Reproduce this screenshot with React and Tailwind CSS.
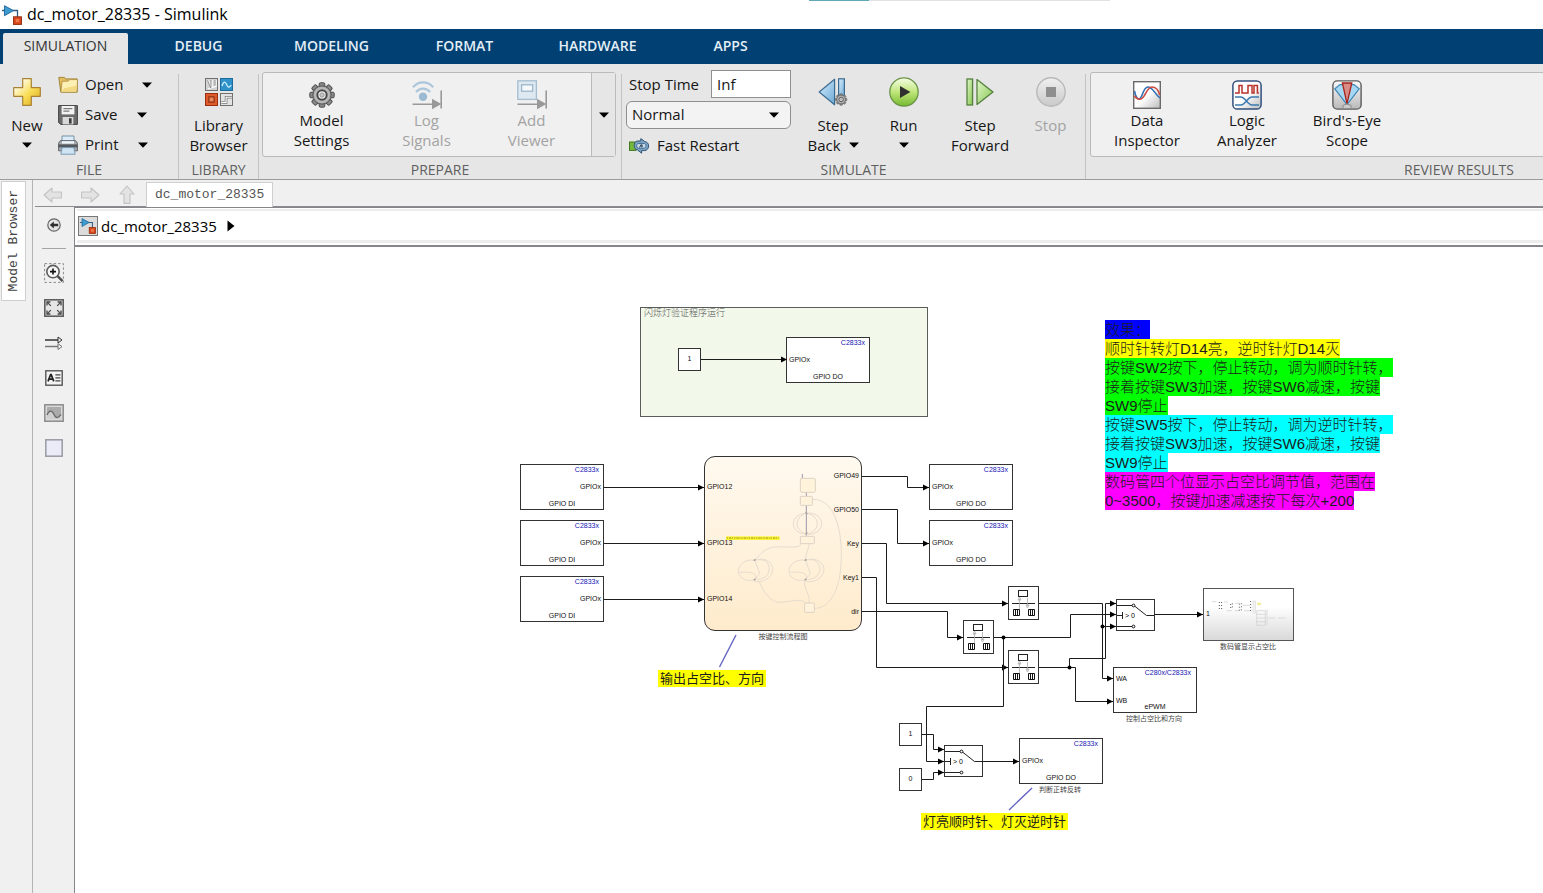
import React, { useState } from 'react';
import clsx from 'clsx';

/* ---------- small shared pieces ---------- */

const Caret = ({ className }) => (
  <svg viewBox="0 0 10 6" className={clsx('h-[6px] w-[10px] shrink-0', className)} aria-hidden="true">
    <path d="M0 0.5h10L5 5.7z" fill="#000" />
  </svg>
);

const Separator = () => <div className="mt-[10px] w-px shrink-0 self-stretch bg-[#c4c4c4]" />;

/* ---------- icons ---------- */

const SimulinkLogo = ({ className }) => (
  <svg viewBox="0 0 20 20" className={className} aria-hidden="true">
    <path d="M0 5.5h3M11 5.5h4.5V12" stroke="#2d5d80" strokeWidth="1.3" fill="none" />
    <path d="M2.5 0.7v10L11.5 5.6z" fill="#3c9bd0" stroke="#1d6496" strokeWidth="0.9" />
    <rect x="11.5" y="11.8" width="8" height="7.6" fill="#d9481c" stroke="#8e2708" strokeWidth="0.9" />
    <rect x="13.8" y="14" width="3.4" height="3.2" fill="#ef7a4d" />
  </svg>
);

const NewIcon = () => (
  <svg viewBox="0 0 28 28" className="size-7" aria-hidden="true">
    <defs>
      <linearGradient id="plus" x1="0" y1="0" x2="1" y2="1">
        <stop offset="0.2" stopColor="#fffbe0" />
        <stop offset="0.55" stopColor="#f9dd55" />
        <stop offset="1" stopColor="#d9a51a" />
      </linearGradient>
    </defs>
    <path
      d="M9.7 0.7h8.6v9h9v8.6h-9v9H9.7v-9h-9V9.7h9z"
      fill="url(#plus)"
      stroke="#a88235"
      strokeWidth="1.2"
      strokeLinejoin="round"
    />
  </svg>
);

const OpenIcon = () => (
  <svg viewBox="0 0 20 20" className="size-5" aria-hidden="true">
    <path d="M0.8 2.4h5.6l1.2 1.5h11.6v13.2H2.8z" fill="#e3bd62" stroke="#9b7a2a" strokeWidth="0.9" />
    <path d="M4.2 6.2h6l1.4-1.6h8l-0.8 12.5H2.8z" fill="#fdf0b4" stroke="#a98a3c" strokeWidth="0.8" />
    <path d="M3.2 16.6l3-3.4 12.6-2.6-0.6 6z" fill="#f4d983" />
  </svg>
);

const SaveIcon = () => (
  <svg viewBox="0 0 20 20" className="size-5" aria-hidden="true">
    <path d="M0.6 0.6h18.8v18.8H2.6l-2-2z" fill="#6b6b6b" stroke="#444" strokeWidth="1" />
    <rect x="3.6" y="1" width="12.8" height="8.4" fill="#f3f3f3" />
    <path d="M5.4 3.6h9M5.4 6.2h6" stroke="#7b7b7b" strokeWidth="1.2" />
    <rect x="4.6" y="12" width="10.8" height="7.4" fill="#d8d8d8" />
    <rect x="11" y="13.2" width="2.6" height="5.4" fill="#3c3c3c" />
  </svg>
);

const PrintIcon = () => (
  <svg viewBox="0 0 20 20" className="size-5" aria-hidden="true">
    <path d="M4 7.5V1h12v6.5" fill="#dcecf7" stroke="#7592a8" strokeWidth="1" />
    <path d="M2.4 5.6h15.2l1.9 2.6v7.6H0.5V8.2z" fill="#a5a9ad" stroke="#5e6367" strokeWidth="0.9" />
    <path d="M0.5 9.4h19v3H0.5z" fill="#55595d" />
    <path d="M4 6.2h12v2.4H4z" fill="#eef6fb" />
    <path d="M4.2 12.6h11.6l1.4 6.6H2.8z" fill="#cfe4f3" stroke="#6f93b0" strokeWidth="0.9" />
  </svg>
);

const LibraryIcon = () => (
  <svg viewBox="0 0 28 28" className="size-7" aria-hidden="true">
    <rect x="0.5" y="0.5" width="12" height="12" fill="#d3d3d3" stroke="#707070" />
    <path d="M3.4 2.4l3.4 8M7 2v7.6M11 2v6.4L3 11" stroke="#fff" strokeWidth="1.3" fill="none" />
    <path d="M2.6 2.4l3.4 8M6 2v7.6M10 2v5.6" stroke="#7d7d7d" strokeWidth="0.8" fill="none" />
    <rect x="15.5" y="0.5" width="12" height="12" fill="#2f93c9" stroke="#1c6c9c" />
    <path d="M17 8c1.6-5 3.2-5 4.6-1.4s2.6 3.2 4.6 0.6" stroke="#c9ecff" strokeWidth="1.3" fill="none" />
    <rect x="0.5" y="15.5" width="12" height="12" fill="#dd5a2c" stroke="#97300d" />
    <rect x="3.9" y="18.9" width="5.2" height="5.2" fill="#e88a5f" stroke="#7e2408" />
    <rect x="15.5" y="15.5" width="12" height="12" fill="#e3e3e3" stroke="#707070" />
    <path d="M16.5 24.4h4.6v-5.2h6" stroke="#777" strokeWidth="2.6" fill="none" />
    <path d="M16.5 24.4h4.6v-5.2h6" stroke="#fff" strokeWidth="1.1" fill="none" />
  </svg>
);

const GEAR_ANGLES = [0, 45, 90, 135, 180, 225, 270, 315];

const GearShape = () => (
  <g>
    {GEAR_ANGLES.map((angle) => (
      <rect
        key={angle}
        x="10.2"
        y="0.8"
        width="5.6"
        height="5"
        rx="1.2"
        fill="#8a8a8a"
        stroke="#4b4b4b"
        strokeWidth="1"
        transform={`rotate(${angle} 13 13)`}
      />
    ))}
    <circle cx="13" cy="13" r="9.2" fill="#9b9b9b" stroke="#555" strokeWidth="1" />
    <circle cx="13" cy="13" r="7" fill="none" stroke="#b9b9b9" strokeWidth="2" />
    <circle cx="13" cy="13" r="4.6" fill="#efefef" stroke="#484848" strokeWidth="1.8" />
    <circle cx="13" cy="13" r="2.2" fill="#c5c5c5" stroke="#777" strokeWidth="0.6" />
  </g>
);

const SettingsIcon = () => (
  <svg viewBox="0 0 26 26" className="size-[26px]" aria-hidden="true">
    <GearShape />
  </svg>
);

const LogSignalsIcon = () => (
  <svg viewBox="0 0 30 30" className="size-[30px]" aria-hidden="true">
    <path d="M1 7.2c5.6-6.4 14.6-6.4 20.2 0" stroke="#abc6db" strokeWidth="2.2" fill="none" />
    <path d="M4 12c4-4.6 10.2-4.6 14.2 0" stroke="#abc6db" strokeWidth="2.2" fill="none" />
    <circle cx="11" cy="16.8" r="4.2" fill="#9cbbd3" />
    <path d="M0.5 24.2h20M29.2 10.5v18" stroke="#999" strokeWidth="1.6" fill="none" />
    <path d="M20 18.8v10.4l9.4-5.2z" fill="#999" />
  </svg>
);

const AddViewerIcon = () => (
  <svg viewBox="0 0 30 30" className="size-[30px]" aria-hidden="true">
    <rect x="0.8" y="0.8" width="18.6" height="18.6" fill="#dde8f1" stroke="#a5bdd0" strokeWidth="1.3" />
    <rect x="4.6" y="4.8" width="11" height="6.4" fill="#f5f9fc" stroke="#9db6ca" strokeWidth="1.3" />
    <path d="M0.5 24.2h20M29.2 10.5v18" stroke="#999" strokeWidth="1.6" fill="none" />
    <path d="M20 18.8v10.4l9.4-5.2z" fill="#999" />
  </svg>
);

const FastRestartIcon = () => (
  <svg viewBox="0 0 20 16" className="h-4 w-5" aria-hidden="true">
    <rect x="0.5" y="4" width="6.4" height="8.4" fill="#76b83c" stroke="#417a1c" />
    <path
      d="M8.4 3h3.4V0.6l4 3c2.6 0.4 3.8 2 3.8 4.4s-1.4 4.4-4 4.6h-3v2.6l-4-3.2c-2.2-0.4-3.4-2-3.4-4.2S6 3.4 8.4 3z"
      fill="#7aa3c6"
      stroke="#2f5475"
      strokeWidth="1"
    />
    <path d="M9 5.6h6.4c2 0.4 2 4 0 4.6H9c-1.8-0.4-1.8-4.2 0-4.6z" fill="#cfe1ef" stroke="#3c6284" strokeWidth="0.9" />
    <path d="M10.5 9.6l1.6-3.2M12.8 6.2v3.4M10.8 8h3.4" stroke="#27455f" strokeWidth="0.9" />
  </svg>
);

const StepBackIcon = () => (
  <svg viewBox="0 0 30 28" className="h-7 w-[30px]" aria-hidden="true">
    <defs>
      <linearGradient id="blueStep" x1="0" y1="0" x2="1" y2="1">
        <stop offset="0" stopColor="#d8efff" />
        <stop offset="1" stopColor="#6aa8d4" />
      </linearGradient>
    </defs>
    <path d="M16.6 1.2v25.6L1.2 14z" fill="url(#blueStep)" stroke="#3d6b8e" strokeWidth="1.2" strokeLinejoin="round" />
    <rect x="20.6" y="0.8" width="5.8" height="20" fill="url(#blueStep)" stroke="#3d6b8e" strokeWidth="1.2" />
    <g transform="translate(17 15.4) scale(0.47)">
      <GearShape />
    </g>
  </svg>
);

const RunIcon = () => (
  <svg viewBox="0 0 30 30" className="size-[30px]" aria-hidden="true">
    <defs>
      <linearGradient id="run" x1="0" y1="0" x2="0" y2="1">
        <stop offset="0" stopColor="#f5fde6" />
        <stop offset="0.5" stopColor="#c0e67a" />
        <stop offset="1" stopColor="#74b92f" />
      </linearGradient>
    </defs>
    <circle cx="15" cy="15" r="14.2" fill="url(#run)" stroke="#6a9448" strokeWidth="1.3" />
    <path d="M11 9v12l10.4-6z" fill="#303030" />
  </svg>
);

const StepForwardIcon = () => (
  <svg viewBox="0 0 28 28" className="size-7" aria-hidden="true">
    <defs>
      <linearGradient id="greenStep" x1="0" y1="0" x2="1" y2="1">
        <stop offset="0" stopColor="#e1f8c9" />
        <stop offset="1" stopColor="#86c552" />
      </linearGradient>
    </defs>
    <rect x="1" y="1" width="5.6" height="26" fill="url(#greenStep)" stroke="#56803f" strokeWidth="1.3" />
    <path d="M11 1.4v25.2L27 14z" fill="url(#greenStep)" stroke="#56803f" strokeWidth="1.3" strokeLinejoin="round" />
  </svg>
);

const StopIcon = () => (
  <svg viewBox="0 0 30 30" className="size-[30px]" aria-hidden="true">
    <defs>
      <linearGradient id="stop" x1="0" y1="0" x2="0" y2="1">
        <stop offset="0" stopColor="#f0f0f0" />
        <stop offset="1" stopColor="#c9c9c9" />
      </linearGradient>
    </defs>
    <circle cx="15" cy="15" r="14.2" fill="url(#stop)" stroke="#b9b9b9" strokeWidth="1.4" />
    <rect x="10" y="10" width="10" height="10" fill="#8f8f8f" />
  </svg>
);

const DataInspectorIcon = () => (
  <svg viewBox="0 0 28 28" className="size-7" aria-hidden="true">
    <defs>
      <linearGradient id="panelFill" x1="0" y1="0" x2="1" y2="1">
        <stop offset="0.5" stopColor="#fff" />
        <stop offset="1" stopColor="#bcbcbc" />
      </linearGradient>
    </defs>
    <rect x="0.7" y="0.7" width="26.6" height="26.6" fill="url(#panelFill)" stroke="#6a6a6a" strokeWidth="1.4" />
    <path d="M1.5 10c1 5 2.4 8 4.4 8 3.6 0 4-12 9-12s6 6 12 11" stroke="#2f6fb3" strokeWidth="1.6" fill="none" />
    <path d="M1.5 15c1.6 2.6 4 3.4 6.4 3 4.6-1 5.6-12 11-12 4.400 0 6.400 2.400 7.800 8" stroke="#cf4a3f" strokeWidth="1.6" fill="none" />
  </svg>
);

const LogicAnalyzerIcon = () => (
  <svg viewBox="0 0 30 30" className="size-[30px]" aria-hidden="true">
    <rect x="0.9" y="0.9" width="28.2" height="28.2" rx="4.4" fill="url(#panelFill)" stroke="#33507f" strokeWidth="1.5" />
    <path d="M3 13h4V5.6h3V13h6V5.6h4V13h2V5.6h3.4V13h1.4" stroke="#b93329" strokeWidth="1.5" fill="none" />
    <path d="M3 17h6c4 0 6.6 8 11 8h7M3 25h6c4 0 6.6-8 11-8h7" stroke="#3b7ab0" strokeWidth="1.5" fill="none" />
  </svg>
);

const BirdsEyeIcon = () => (
  <svg viewBox="0 0 30 30" className="size-[30px]" aria-hidden="true">
    <defs>
      <linearGradient id="birdFill" x1="0" y1="0" x2="0" y2="1">
        <stop offset="0" stopColor="#fafafa" />
        <stop offset="1" stopColor="#b9b9b9" />
      </linearGradient>
    </defs>
    <rect x="0.9" y="0.9" width="28.2" height="28.2" rx="4.4" fill="url(#birdFill)" stroke="#5c5c5c" strokeWidth="1.4" />
    <path d="M15 24.6L2.8 8.8 8 4.6h14l5.2 4.2z" fill="#a6d7f2" stroke="#3d86b7" strokeWidth="1.2" />
    <path d="M15 23.6L10.4 3h9.4z" fill="#d98b85" stroke="#a8231c" strokeWidth="1.3" />
    <path d="M11 28v-2.6l4-1.4 4 1.4V28" fill="#ccc" stroke="#8a8a8a" strokeWidth="1" />
  </svg>
);

const NavArrow = ({ className }) => (
  <svg viewBox="0 0 20 16" className={clsx('h-4 w-5', className)} aria-hidden="true">
    <path d="M1 8l8-7v4h9.4v6H9v4z" fill="#e3e3e3" stroke="#c3c3c3" strokeWidth="1.1" strokeLinejoin="round" />
  </svg>
);

/* ---------- tool strip ---------- */

const TOOLSTRIP_TABS = ['SIMULATION', 'DEBUG', 'MODELING', 'FORMAT', 'HARDWARE', 'APPS'];

const Group = ({ label, className, children }) => (
  <section className={clsx('flex shrink-0 flex-col', className)}>
    <div className="flex h-24 pt-[6px]">{children}</div>
    <h2 className="h-[19px] text-center text-[14px] leading-5 text-[#5f5f5f]">{label}</h2>
  </section>
);

const BigButton = ({ icon, lines, caret, inlineCaret, disabled, className }) => (
  <button
    type="button"
    disabled={disabled}
    className={clsx('flex shrink-0 flex-col items-center leading-5', disabled ? 'text-[#a3a3a3]' : 'text-[#161616]', className)}
  >
    <span className="mb-px flex h-11 items-center justify-center">{icon}</span>
    {lines.map((line, i) => (
      <span key={line} className="flex items-center gap-2 whitespace-nowrap">
        {line}
        {inlineCaret && i === lines.length - 1 && <Caret />}
      </span>
    ))}
    {caret && <Caret className="mt-[7px]" />}
  </button>
);

const PanelButton = ({ icon, lines, disabled, className }) => (
  <button
    type="button"
    disabled={disabled}
    className={clsx('flex shrink-0 flex-col items-center pt-[6px] leading-5', disabled ? 'text-[#a3a3a3]' : 'text-[#161616]', className)}
  >
    <span className="flex h-[31px] items-center justify-center">{icon}</span>
    {lines.map((line) => (
      <span key={line} className="whitespace-nowrap">{line}</span>
    ))}
  </button>
);

const FileRow = ({ icon, label }) => (
  <button type="button" className="flex h-[30px] items-center text-left text-[#161616]">
    {icon}
    <span className="mr-[19px] ml-[7px] min-w-[33px] pb-[2px]">{label}</span>
    <Caret />
  </button>
);

const Toolstrip = () => {
  const [stopTime, setStopTime] = useState('Inf');
  const [mode, setMode] = useState('Normal');

  return (
    <div className="flex shrink-0 overflow-hidden border-b border-[#9b9b9b] bg-[#e6e6e6] text-[15px]">
      <Group label="FILE" className="w-[178px]">
        <BigButton icon={<NewIcon />} lines={['New']} caret className="w-[54px]" />
        <div className="ml-1 flex flex-col">
          <FileRow icon={<OpenIcon />} label="Open" />
          <FileRow icon={<SaveIcon />} label="Save" />
          <FileRow icon={<PrintIcon />} label="Print" />
        </div>
      </Group>
      <Separator />

      <Group label="LIBRARY" className="w-[79px]">
        <BigButton icon={<LibraryIcon />} lines={['Library', 'Browser']} className="w-full" />
      </Group>
      <Separator />

      <Group label="PREPARE" className="w-[362px]">
        <div className="mt-[2px] ml-[3px] flex h-[85px] rounded-[3px] border border-[#bababa] bg-[#f0f0f0] pl-[6px]">
          <PanelButton icon={<SettingsIcon />} lines={['Model', 'Settings']} className="w-[105px]" />
          <PanelButton icon={<LogSignalsIcon />} lines={['Log', 'Signals']} disabled className="w-[105px]" />
          <PanelButton icon={<AddViewerIcon />} lines={['Add', 'Viewer']} disabled className="w-[105px]" />
          <button
            type="button"
            aria-label="More prepare tools"
            className="ml-[7px] flex w-6 items-center justify-center border-l border-[#bababa] bg-[#e6e6e6]"
          >
            <Caret />
          </button>
        </div>
      </Group>
      <Separator />

      <Group label="SIMULATE" className="w-[463px]">
        <div className="ml-1 flex w-[165px] flex-col text-[#161616]">
          <div className="flex items-center justify-between">
            <label htmlFor="stop-time" className="ml-[3px] whitespace-nowrap">Stop Time</label>
            <input
              id="stop-time"
              value={stopTime}
              onChange={(e) => setStopTime(e.target.value)}
              className="h-7 w-20 border border-[#8f8f8f] bg-white px-[5px] outline-none"
            />
          </div>
          <div className="relative mt-[3px]">
            <select
              aria-label="Simulation mode"
              value={mode}
              onChange={(e) => setMode(e.target.value)}
              className="h-7 w-full appearance-none rounded-[6px] border border-[#8f8f8f] bg-[#f3f3f3] px-[5px] pb-[2px] leading-5"
            >
              <option>Normal</option>
              <option>Accelerator</option>
              <option>External</option>
            </select>
            <Caret className="pointer-events-none absolute top-[11px] right-3" />
          </div>
          <button type="button" className="mt-[3px] flex h-[27px] items-center gap-2 px-[3px] whitespace-nowrap">
            <FastRestartIcon />
            Fast Restart
          </button>
        </div>
        <BigButton icon={<StepBackIcon />} lines={['Step', 'Back']} inlineCaret className="ml-[6px] w-[72px]" />
        <BigButton icon={<RunIcon />} lines={['Run']} caret className="w-[69px]" />
        <BigButton icon={<StepForwardIcon />} lines={['Step', 'Forward']} className="w-[84px]" />
        <BigButton icon={<StopIcon />} lines={['Stop']} disabled className="w-[57px]" />
      </Group>
      <Separator />

      <Group label="REVIEW RESULTS" className="w-[746px]">
        <div className="mt-[2px] ml-1 flex h-[85px] w-full rounded-[3px] border border-[#bababa] bg-[#f0f0f0] pl-[6px]">
          <PanelButton icon={<DataInspectorIcon />} lines={['Data', 'Inspector']} className="w-[100px]" />
          <PanelButton icon={<LogicAnalyzerIcon />} lines={['Logic', 'Analyzer']} className="w-[100px]" />
          <PanelButton icon={<BirdsEyeIcon />} lines={["Bird's-Eye", 'Scope']} className="w-[100px]" />
        </div>
      </Group>
    </div>
  );
};

/* ---------- palette on the left of the canvas ---------- */

const PALETTE = [
  {
    label: 'Zoom',
    icon: (
      <svg viewBox="0 0 20 20" className="size-5" aria-hidden="true">
        <rect x="0.6" y="0.6" width="18.8" height="18.8" fill="none" stroke="#8a8a8a" strokeDasharray="2.5 2" />
        <circle cx="9" cy="8.6" r="6.2" fill="#f6f6f6" stroke="#5c5c5c" strokeWidth="1.6" />
        <path d="M6 8.600h6M9 5.600v6" stroke="#111" strokeWidth="1.6" />
        <path d="M13.6 13.2l5 5" stroke="#4c4c4c" strokeWidth="2.4" />
      </svg>
    ),
  },
  {
    label: 'Fit to view',
    icon: (
      <svg viewBox="0 0 20 18" className="h-[18px] w-5" aria-hidden="true">
        <rect x="0.8" y="0.8" width="18.4" height="16.4" fill="#e6e6e6" stroke="#5f5f5f" strokeWidth="1.6" />
        <path d="M3 6.400V3h3.400M13.600 3H17v3.400M3 11.600V15h3.400M13.600 15H17v-3.400" stroke="#444" strokeWidth="1.3" fill="none" />
        <path d="M3.400 3.400l3.400 3.400M16.600 3.400l-3.400 3.400M3.400 14.600l3.400-3.400M16.600 14.600l-3.400-3.400" stroke="#444" strokeWidth="1.2" />
      </svg>
    ),
  },
  {
    label: 'Sample time legend',
    icon: (
      <svg viewBox="0 0 20 16" className="h-4 w-5" aria-hidden="true">
        <path d="M1 5h14" stroke="#333" strokeWidth="1.5" />
        <path d="M1 11.5h14" stroke="#777" strokeWidth="1.5" />
        <path d="M14 2v6l4-3z" fill="#eee" stroke="#333" />
        <path d="M14 8.6v6l4-3z" fill="#eee" stroke="#777" />
      </svg>
    ),
  },
  {
    label: 'Annotation',
    icon: (
      <svg viewBox="0 0 18 16" className="h-4 w-[18px]" aria-hidden="true">
        <rect x="0.8" y="0.8" width="16.4" height="14.4" fill="#f4f4f4" stroke="#555" strokeWidth="1.4" />
        <path d="M3 11.4L5.6 4.6h0.6l2.6 6.8M4 9.2h4" stroke="#222" strokeWidth="1.7" fill="none" />
        <path d="M10.4 4.8h5M10.4 7.8h5M10.4 10.8h5" stroke="#444" strokeWidth="1.2" />
      </svg>
    ),
  },
  {
    label: 'Image',
    icon: (
      <svg viewBox="0 0 20 18" className="h-[18px] w-5" aria-hidden="true">
        <rect x="0.8" y="0.8" width="18.4" height="16.4" fill="#dadada" stroke="#8c8c8c" strokeWidth="1.5" />
        <rect x="3" y="3" width="14" height="12" fill="#ababab" />
        <path d="M3 11c2-5 5-5 7-0.600s4.400 4 7 0V15H3z" fill="#cfcfcf" />
        <path d="M3 11c2-5 5-5 7-0.600s4.400 4 7 0" fill="none" stroke="#6a6a6a" strokeWidth="1.3" />
      </svg>
    ),
  },
  {
    label: 'Area',
    icon: (
      <svg viewBox="0 0 18 18" className="size-[18px]" aria-hidden="true">
        <rect x="0.8" y="0.8" width="16.4" height="16.4" fill="#ebebf8" stroke="#9a9aa4" strokeWidth="1.5" />
      </svg>
    ),
  },
];

const Palette = () => (
  <div className="flex w-[41px] shrink-0 flex-col items-center bg-[#f0f0f0]">
    <button type="button" aria-label="Hide browser" className="mt-2 flex h-5 w-6 items-center justify-center">
      <svg viewBox="0 0 14 14" className="size-[14px]" aria-hidden="true">
        <circle cx="7" cy="7" r="6.2" fill="#e4e4e4" stroke="#666" strokeWidth="1.2" />
        <path d="M2.8 7l4-3.4v2.2h4.4v2.4H6.8v2.2z" fill="#2d2d2d" />
      </svg>
    </button>
    <div className="mt-[13px] h-px w-6 bg-[#a5a5a5]" />
    <div className="mt-[6px] flex flex-col">
      {PALETTE.map((tool) => (
        <button key={tool.label} type="button" aria-label={tool.label} className="flex h-[35px] w-6 items-center justify-center">
          {tool.icon}
        </button>
      ))}
    </div>
  </div>
);

/* ---------- block diagram ---------- */

// Scroll position of the canvas inside the model
const VIEW = { x: 75, y: 247 };

const at = (x, y, w, h) => ({ left: x - VIEW.x, top: y - VIEW.y, width: w, height: h });

const GPIO_BLOCKS = [
  { id: 'blink', x: 786, y: 337, name: 'GPIO DO', side: 'in' },
  { id: 'di12', x: 520, y: 464, name: 'GPIO DI', side: 'out' },
  { id: 'di13', x: 520, y: 520, name: 'GPIO DI', side: 'out' },
  { id: 'di14', x: 520, y: 576, name: 'GPIO DI', side: 'out' },
  { id: 'do49', x: 929, y: 464, name: 'GPIO DO', side: 'in' },
  { id: 'do50', x: 929, y: 520, name: 'GPIO DO', side: 'in' },
  { id: 'dir', x: 1019, y: 738, name: 'GPIO DO', side: 'in' },
];

const CONSTANTS = [
  { id: 'c0', x: 678, y: 348, value: 1 },
  { id: 'c1', x: 899, y: 723, value: 1 },
  { id: 'c2', x: 899, y: 768, value: 0 },
];

const RATE_BLOCKS = [
  { id: 'r0', x: 1008, y: 586 },
  { id: 'r1', x: 963, y: 620 },
  { id: 'r2', x: 1008, y: 650 },
];

const SWITCHES = [
  { id: 's0', x: 1116, y: 599 },
  { id: 's1', x: 944, y: 745 },
];

const CAPTIONS = [
  { text: '按键控制流程图', x: 743, y: 632, w: 80 },
  { text: '数码管显示占空比', x: 1203, y: 642, w: 90 },
  { text: '控制占空比和方向', x: 1109, y: 714, w: 90 },
  { text: '判断正转反转', x: 1020, y: 785, w: 80 },
];

// Each wire ends in an arrow head at its last point
const WIRES = [
  [[701, 359.5], [787, 359.5]],
  [[604, 487.5], [704, 487.5]],
  [[604, 543.5], [704, 543.5]],
  [[604, 599.5], [704, 599.5]],
  [[862, 476.5], [907.5, 476.5], [907.5, 487.5], [929, 487.5]],
  [[862, 509.5], [897.5, 509.5], [897.5, 543.5], [929, 543.5]],
  [[862, 543.5], [886.5, 543.5], [886.5, 603.5], [1008, 603.5]],
  [[862, 577.5], [876.5, 577.5], [876.5, 667.5], [1008, 667.5]],
  [[862, 611.5], [947.5, 611.5], [947.5, 637.5], [963, 637.5]],
  [[994, 637.5], [1070.5, 637.5], [1070.5, 614.5], [1116, 614.5]],
  [[1003.5, 637.5], [1003.5, 706.5], [926.5, 706.5], [926.5, 761.5], [944, 761.5]],
  [[1039, 603.5], [1102.5, 603.5], [1102.5, 678.5], [1113, 678.5]],
  [[1102.5, 626.5], [1116, 626.5]],
  [[1039, 667.5], [1075.5, 667.5], [1075.5, 701.5], [1113, 701.5]],
  [[1069.5, 667.5], [1069.5, 658.5], [1105.5, 658.5], [1105.5, 603.5], [1116, 603.5]],
  [[1155, 614.5], [1203, 614.5]],
  [[922, 734.5], [933.5, 734.5], [933.5, 749.5], [944, 749.5]],
  [[922, 779.5], [933.5, 779.5], [933.5, 772.5], [944, 772.5]],
  [[982, 761.5], [1019, 761.5]],
];

const JUNCTIONS = [[1003.5, 637.5], [1102.5, 626.5], [1069.5, 667.5]];

const Wires = () => (
  <svg
    viewBox={`${VIEW.x} ${VIEW.y} 1468 646`}
    width="1468"
    height="646"
    className="pointer-events-none absolute top-0 left-0 max-w-none"
    aria-hidden="true"
  >
    {WIRES.map((points) => {
      const [ex, ey] = points[points.length - 1];
      return (
        <g key={points.join(' ')}>
          <polyline points={points.map((p) => p.join(',')).join(' ')} fill="none" stroke="#1c1c1c" strokeWidth="1" />
          <path d={`M${ex} ${ey}l-6 -3v6z`} fill="#000" />
        </g>
      );
    })}
    {JUNCTIONS.map(([x, y]) => (
      <circle key={`${x}-${y}`} cx={x} cy={y} r="2" fill="#000" />
    ))}
    <path d="M736 635L719.5 667M1032 788L1009 810" stroke="#6464c4" strokeWidth="1.4" />
  </svg>
);

const GpioBlock = ({ x, y, name, side }) => (
  <div
    className="absolute flex flex-col justify-between border border-[#333] bg-white text-[7px] leading-[10px] text-[#111]"
    style={at(x, y, 84, 46)}
  >
    <span className="pr-1 text-right text-[#1414b4]">C2833x</span>
    <span className={clsx('px-[2px]', side === 'out' && 'text-right')}>GPIOx</span>
    <span className="text-center">{name}</span>
  </div>
);

const RateTransition = ({ x, y }) => (
  <div className="absolute border border-[#333] bg-white" style={at(x, y, 31, 34)}>
    <svg viewBox="0 0 29 32" className="h-8 w-[29px]" aria-hidden="true">
      <rect x="9.5" y="3.5" width="9" height="6" fill="#fff" stroke="#222" />
      <path d="M3 16.5h23" stroke="#222" />
      <path d="M10.5 22V12M9 13l1.5-3 1.5 3zM18.5 11v8M17 18l1.5 3 1.5-3z" stroke="#a9a9a9" strokeWidth="0.8" fill="#fff" />
      <path d="M4.5 22.5h6v6h-6zM6.5 22v7M8.5 22v7M19.5 22.5h6v6h-6zM21.5 22v7M23.5 22v7" stroke="#111" fill="none" />
    </svg>
  </div>
);

const SwitchBlock = ({ x, y }) => (
  <div className="absolute border border-[#333] bg-white text-[7px] leading-none" style={at(x, y, 39, 32)}>
    <svg viewBox="0 0 37 30" className="absolute inset-0 h-[30px] w-[37px]" aria-hidden="true">
      <path d="M0 5.5h15M0 26.5h15M0 15.5h5M5.5 12v7M17.5 6l12 9.5H37" stroke="#222" fill="none" />
      <circle cx="16.5" cy="5.5" r="1.4" fill="#fff" stroke="#111" />
      <circle cx="16.5" cy="26.5" r="1.4" fill="#fff" stroke="#111" />
    </svg>
    <span className="absolute top-3 left-2">&gt; 0</span>
  </div>
);

const ChartBlock = () => (
  <div
    className="absolute rounded-[11px] border border-[#333] bg-gradient-to-b from-[#fff9ef] to-[#ffebcc] text-[7px] leading-[10px] text-[#111]"
    style={at(704, 456, 158, 175)}
  >
    <svg viewBox="195 36 468 519" className="absolute inset-0 h-[173px] w-[156px]" aria-hidden="true">
      <g fill="none" stroke="#e6dccf" strokeWidth="3">
        <path d="M517 163c62-2 87 78 87 167s-26 160-81 160" />
        <ellipse cx="496" cy="236" rx="36" ry="31" />
        <ellipse cx="508" cy="236" rx="37" ry="32" />
        <path d="M484 297c-10 16-52 6-80 9s-46 22-60 42M508 296l-14 52M494 404c-4 32 18 40 13 70" />
        <path d="M358 410c14 34 34 62 62 62s66-16 78 4" />
        <path d="M345 346c-30-6-52 16-50 34 2 24 36 34 52 20 4-18-18-20-48-18M345 346c34-12 54 10 53 28-2 26-32 42-56 34M345 346l14 40-18 22" />
        <path d="M354 344c28-2 36 18 33 34s-18 24-36 26" />
        <path d="M497 346c-30-6-52 16-50 34 2 24 36 34 52 20 4-18-18-20-48-18M497 346c34-12 56 10 55 28-2 26-32 42-56 34M497 346l14 40-18 22" />
        <path d="M506 344c28-2 36 18 33 34s-18 24-36 26" />
      </g>
      <path d="M487 87v13M499 142v12M499 181v91" stroke="#9c97ad" strokeWidth="3" />
      <path d="M341 347l6-4M341 406l6-5M494 347l6-4M494 406l6-5M497 201l5 6M497 266l5-4" stroke="#a9a49c" strokeWidth="4" />
      <g fill="#fff3dc" stroke="#dcd2c4" strokeWidth="3">
        <rect x="481" y="100" width="45" height="42" rx="5" />
        <rect x="481" y="154" width="36" height="27" rx="2" />
        <rect x="481" y="274" width="42" height="22" rx="2" />
        <rect x="494" y="474" width="29" height="28" rx="3" />
      </g>
      <rect x="258" y="274" width="161" height="11" fill="#fcf536" />
      <path d="M260 279h156" stroke="#b8b126" strokeWidth="5" strokeDasharray="4 3 7 2 3 3" />
    </svg>
    <div className="relative flex h-full justify-between px-[2px]">
      <div className="flex flex-col gap-[46px] pt-[25px]">
        <span>GPIO12</span>
        <span>GPIO13</span>
        <span>GPIO14</span>
      </div>
      <div className="flex flex-col gap-6 pt-[14px] text-right">
        <span>GPIO49</span>
        <span>GPIO50</span>
        <span>Key</span>
        <span>Key1</span>
        <span>dir</span>
      </div>
    </div>
  </div>
);

const DisplaySubsystem = () => (
  <div
    className="absolute flex items-center border border-[#555] bg-gradient-to-b from-white from-35% to-[#d9d9d9] pl-[2px] text-[7px] text-[#111]"
    style={at(1203, 588, 91, 53)}
  >
    <svg viewBox="492 59 267 153" className="absolute inset-0 h-[51px] w-[89px]" aria-hidden="true">
      <path
        d="M538 98v26M545 98v24M572 104v18M577 102v12M598 103v22M604 102v22M632 95v34"
        stroke="#555"
        strokeWidth="3"
        strokeDasharray="3 6"
      />
      <path d="M516 97h14M552 98h12M560 124h16M584 102h16M584 124h12M608 108h22M612 124h18" stroke="#c9c9c9" strokeWidth="2" />
      <rect x="639" y="95" width="8" height="36" fill="#f2f2f2" stroke="#ddd" strokeWidth="2" />
      <rect x="651" y="100" width="12" height="7" fill="#f1ef9a" />
      <path d="M650 124h26v44h-26zM650 135h26M650 146h26M650 157h26M681 120v46M684 146h22M714 146h22" stroke="#cfcfcf" strokeWidth="2" fill="none" />
    </svg>
    <span className="relative">1</span>
  </div>
);

const EpwmBlock = () => (
  <div
    className="absolute flex flex-col justify-between border border-[#333] bg-white text-[7px] leading-[10px] text-[#111]"
    style={at(1113, 667, 84, 46)}
  >
    <span className="pr-[5px] text-right text-[#1414b4]">C280x/C2833x</span>
    <span className="absolute top-[6px] left-[2px]">WA</span>
    <span className="absolute top-7 left-[2px]">WB</span>
    <span className="text-center">ePWM</span>
  </div>
);

const NOTE_LINES = [
  { text: '效果：', tone: 'bg-[#0000ff]' },
  { text: '顺时针转灯D14亮，逆时针灯D14灭', tone: 'bg-[#ffff00]' },
  { text: '按键SW2按下，停止转动，调为顺时针转，', tone: 'bg-[#00ff00]' },
  { text: '接着按键SW3加速，按键SW6减速，按键', tone: 'bg-[#00ff00]' },
  { text: 'SW9停止', tone: 'bg-[#00ff00]' },
  { text: '按键SW5按下，停止转动，调为逆时针转，', tone: 'bg-[#00ffff]' },
  { text: '接着按键SW3加速，按键SW6减速，按键', tone: 'bg-[#00ffff]' },
  { text: 'SW9停止', tone: 'bg-[#00ffff]' },
  { text: '数码管四个位显示占空比调节值，范围在', tone: 'bg-[#ff00ff]' },
  { text: '0~3500，按键加速减速按下每次+200', tone: 'bg-[#ff00ff]' },
];

const Note = () => (
  <div
    className="absolute flex flex-col items-start text-[15px] leading-[19px] font-light whitespace-nowrap text-[#1c1c1c]"
    style={{ left: 1105 - VIEW.x, top: 320 - VIEW.y }}
  >
    {NOTE_LINES.map((line, i) => (
      <span key={i} className={line.tone}>{line.text}</span>
    ))}
  </div>
);

const Callout = ({ x, y, children }) => (
  <div
    className="absolute bg-[#ffff00] px-[2px] text-[13px] leading-[17px] whitespace-nowrap text-[#1c1c1c]"
    style={{ left: x - VIEW.x, top: y - VIEW.y }}
  >
    {children}
  </div>
);

const Diagram = () => (
  <main className="relative flex-1 overflow-hidden bg-white font-['Liberation_Sans','Noto_Sans_CJK_SC',sans-serif]">
    <div
      className="absolute border border-[#5c5c5c] bg-[#f2f8ea] px-[3px] text-[9px] leading-[11px] font-light text-[#555]"
      style={at(640, 307, 288, 110)}
    >
      闪烁灯验证程序运行
    </div>

    {CONSTANTS.map((c) => (
      <div
        key={c.id}
        className="absolute flex items-center justify-center border border-[#333] bg-white text-[7px] text-[#111]"
        style={at(c.x, c.y, 23, 23)}
      >
        {c.value}
      </div>
    ))}
    {GPIO_BLOCKS.map((block) => (
      <GpioBlock key={block.id} {...block} />
    ))}
    <ChartBlock />
    {RATE_BLOCKS.map((block) => (
      <RateTransition key={block.id} x={block.x} y={block.y} />
    ))}
    {SWITCHES.map((block) => (
      <SwitchBlock key={block.id} x={block.x} y={block.y} />
    ))}
    <DisplaySubsystem />
    <EpwmBlock />
    <Wires />

    {CAPTIONS.map((caption) => (
      <div
        key={caption.text}
        className="absolute text-center text-[7px] leading-[9px] whitespace-nowrap text-[#444]"
        style={at(caption.x, caption.y, caption.w, 9)}
      >
        {caption.text}
      </div>
    ))}
    <Callout x={658} y={670}>输出占空比、方向</Callout>
    <Callout x={921} y={813}>灯亮顺时针、灯灭逆时针</Callout>
    <Note />
  </main>
);

/* ---------- window ---------- */

const App = () => {
  const [activeTab, setActiveTab] = useState('SIMULATION');

  return (
    <div className="flex h-screen flex-col overflow-hidden bg-[#f0f0f0] font-['Open_Sans','Noto_Sans',sans-serif] text-black">
      <header className="relative flex h-[29px] shrink-0 items-center bg-white pl-[2px]">
        <div className="absolute top-0 left-[809px] h-px w-[301px] bg-[#e2e2e2]">
          <div className="h-px w-[60px] bg-[#5fa8b4]" />
        </div>
        <SimulinkLogo className="size-5" />
        <h1 className="ml-[5px] pb-px text-[16px] leading-5">dc_motor_28335 - Simulink</h1>
      </header>

      <nav className="flex h-[35px] shrink-0 items-end gap-2 bg-[#004073] pl-[3px]">
        {TOOLSTRIP_TABS.map((tab) => (
          <button
            key={tab}
            type="button"
            onClick={() => setActiveTab(tab)}
            className={clsx(
              'h-[31px] w-[125px] rounded-t-[2px] pb-[6px] text-[14px]',
              tab === activeTab ? 'bg-[#e6e6e6] text-[#333]' : 'font-semibold text-[#e4eef6]'
            )}
          >
            {tab}
          </button>
        ))}
      </nav>

      <Toolstrip />

      <div className="flex min-h-0 flex-1">
        <aside className="w-[33px] shrink-0 border-r border-[#b4b4b4] pt-px pl-px">
          <button
            type="button"
            className="flex h-[120px] w-[25px] items-center justify-center border border-[#cfcfcf] bg-white font-['Liberation_Mono',monospace] text-[13px] leading-5 text-[#444]"
          >
            <span className="rotate-180 [writing-mode:vertical-rl]">Model Browser</span>
          </button>
        </aside>

        <div className="flex min-w-0 flex-1 flex-col">
          <div className="ml-[2px] flex h-[27px] shrink-0 items-end border-b border-[#8b8b90]">
            <div className="flex h-full items-center gap-[17px] pt-[4px] pl-2">
              <button type="button" disabled aria-label="Back"><NavArrow /></button>
              <button type="button" disabled aria-label="Forward"><NavArrow className="rotate-180" /></button>
              <button type="button" disabled aria-label="Up to parent"><NavArrow className="rotate-90" /></button>
            </div>
            <button
              type="button"
              className="-mb-px ml-[9px] h-[25px] border border-b-0 border-[#cfcfcf] bg-white px-2 font-['Liberation_Mono',monospace] text-[13px] text-[#555]"
            >
              dc_motor_28335
            </button>
          </div>

          <div className="flex min-h-0 flex-1">
            <Palette />
            <div className="flex min-w-0 flex-1 flex-col border-l border-[#85858a]">
              <div className="flex h-10 shrink-0 items-stretch border-t border-b-2 border-[#85858a] bg-white">
                <div className="mt-px mb-[2px] ml-[2px] flex flex-1 items-center border-t-2 border-b-3 border-[#ededed]">
                  <span className="ml-px flex size-5 items-center justify-center border border-[#777] bg-[#dcdcdc]">
                    <SimulinkLogo className="size-4" />
                  </span>
                  <a href="#root" className="ml-[3px] text-[15px] leading-5">dc_motor_28335</a>
                  <svg viewBox="0 0 8 12" className="ml-[10px] h-3 w-2" aria-hidden="true">
                    <path d="M0.5 0.5v11L7.5 6z" fill="#000" />
                  </svg>
                </div>
              </div>
              <Diagram />
            </div>
          </div>
        </div>
      </div>
    </div>
  );
};

export default App;
